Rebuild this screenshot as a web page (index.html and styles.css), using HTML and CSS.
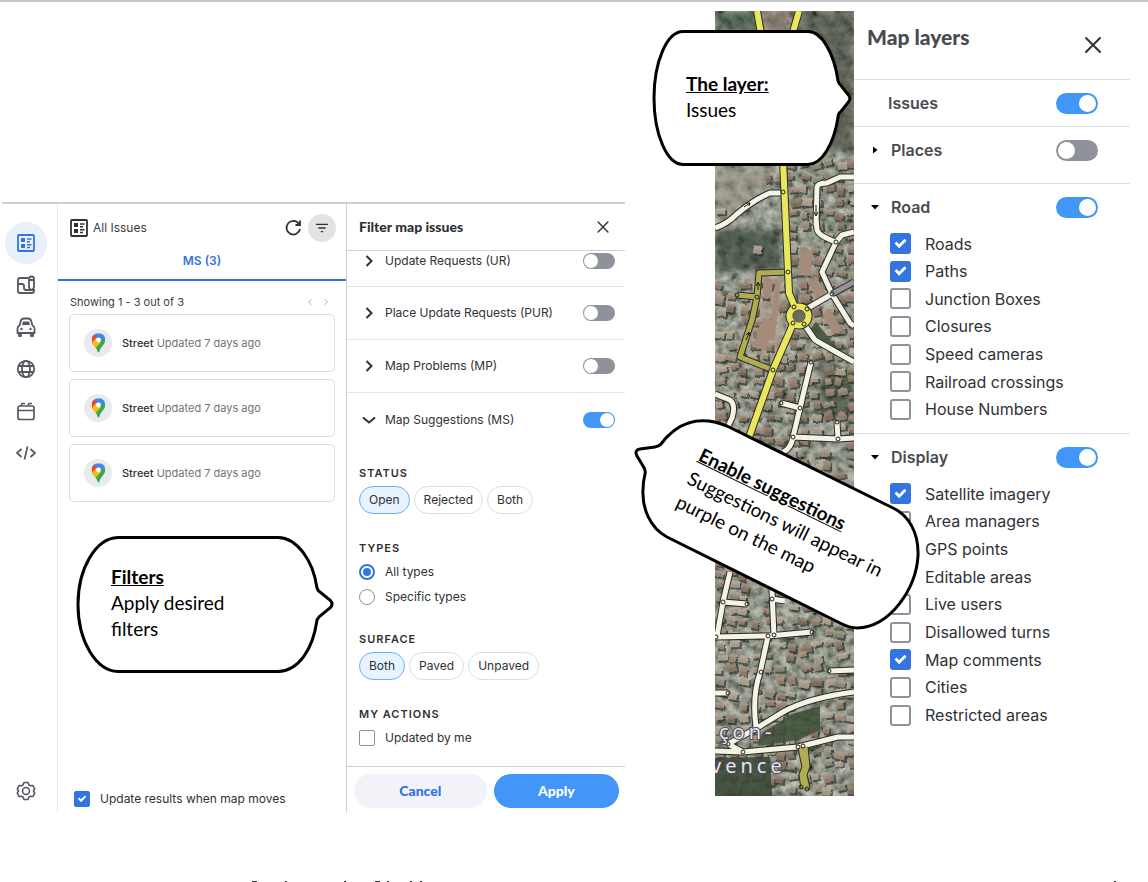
FILE: index.html
```html
<!DOCTYPE html>
<html lang="en">
<head>
<meta charset="utf-8">
<meta name="viewport" content="width=device-width, initial-scale=1">
<title>Map suggestions</title>
<link rel="stylesheet" href="styles.css">
</head>
<body>
<svg class="sprite" aria-hidden="true">
  <symbol id="i-list" viewBox="0 0 20 20"><g fill="none" stroke="currentColor" stroke-width="1.8"><rect x="2" y="2" width="16" height="16" rx="1"/><path d="M11 6h4.500M11 8.700h3M11 11.800h4.500M11 14.500h3" stroke-width="1.400"/></g><path d="M5 5h4v4H5zM5 11h4v4H5z" fill="currentColor"/></symbol>
  <symbol id="i-close" viewBox="0 0 20 20"><path d="M3 3l14 14M17 3L3 17" fill="none" stroke="currentColor" stroke-width="2" stroke-linecap="round"/></symbol>
  <symbol id="i-pin" viewBox="0 0 20 26">
    <clipPath id="pin-shape"><path d="M10 0C4.500 0 1 4 1 9c0 6 6 8 8 16q1 2 2 0c2-8 8-10 8-16 0-5-3.500-9-9-9z"/></clipPath>
    <g clip-path="url(#pin-shape)"><path d="M0 0h20v26H0z" fill="#34a853"/><path d="M2 0h16l1.500 4L10 12 2 4z" fill="#4285f4"/><path d="M0 2l3-.5L9 7 2 15H0z" fill="#ea4335"/><path d="M0 14L7 6l6 6-8 9z" fill="#fbbc04"/></g>
    <circle cx="10" cy="9" r="3.300" fill="#fff"/>
  </symbol>
</svg>
<main class="board">
  <section class="issues-app">
    <nav class="rail" aria-label="Sections">
      <button class="rail-item active" aria-label="Issues"><svg><use href="#i-list"/></svg></button>
      <button class="rail-item" aria-label="Map edits"><svg viewBox="0 0 20 20"><g fill="none" stroke="currentColor" stroke-width="1.800" stroke-linejoin="round"><path d="M12 3H4Q2 3 2 5v11q0 2 2 2h12q2 0 2-2v-2M2 9h4q2 0 2 2v2q0 2 2 2h8M13 3.500q0-2 2.500-2t2.500 2v9l-2 2.500h-1l-2-2.500zM13 5h5"/></g></svg></button>
      <button class="rail-item" aria-label="Drives"><svg viewBox="0 0 20 20"><g fill="none" stroke="currentColor" stroke-width="1.800" stroke-linejoin="round"><path d="M3.500 8.500l1.300-4.500Q5.500 1.500 8 1.500h4q2.500 0 3.200 2.500l1.300 4.500q2 1 2 3V16h-17v-4.500q0-2 2-3zM3 16v3h2v-3M15 16v3h2v-3"/></g><path d="M6 8l1-3.500h6L14 8z" fill="currentColor"/><circle cx="5.500" cy="12" r="1.200" fill="currentColor"/><circle cx="14.500" cy="12" r="1.200" fill="currentColor"/></svg></button>
      <button class="rail-item" aria-label="Areas"><svg viewBox="0 0 20 20"><g fill="none" stroke="currentColor" stroke-width="1.800"><circle cx="10" cy="10" r="8.200"/><ellipse cx="10" cy="10" rx="4" ry="8.200"/><path d="M2.500 7h15M2.500 13h15"/></g></svg></button>
      <button class="rail-item" aria-label="Events"><svg viewBox="0 0 20 20"><g fill="none" stroke="currentColor" stroke-width="1.700" stroke-linejoin="round"><rect x="2" y="5" width="16" height="13.500" rx="2"/><path d="M2 9.500h16M5 5l1-2.500h3M12 4.500l1-2h3"/></g></svg></button>
      <button class="rail-item" aria-label="Scripts"><svg viewBox="0 0 20 20"><path d="M5.500 6L1 10l4.500 4M14.500 6l4.500 4-4.500 4M11.500 3.500l-3 13" fill="none" stroke="currentColor" stroke-width="1.700"/></svg></button>
      <button class="rail-item settings" aria-label="Settings"><svg viewBox="0 0 20 20"><g fill="none" stroke="currentColor" stroke-width="1.600" stroke-linejoin="round"><path d="M8 1.500h4l1 2.500 1.500.8 2.500-.3 1.700 3.300L17.500 10l1.200 2.200-1.700 3.300-2.500-.3L13 16l-1 2.500H8L7 16l-1.500-.8-2.500.3-1.700-3.300L2.500 10 1.300 7.800 3 4.500l2.500.3L7 4z"/><circle cx="10" cy="10" r="3.500"/></g></svg></button>
    </nav>

    <section class="issue-list">
      <header class="list-head">
        <svg class="icon"><use href="#i-list"/></svg><h2>All Issues</h2>
        <button class="plain" aria-label="Refresh"><svg class="icon" viewBox="0 0 20 20"><path d="M16 6A6.800 6.800 0 1 0 17 11M17 2.500V7h-4.500" fill="none" stroke="currentColor" stroke-width="1.800"/></svg></button>
        <button class="plain round" aria-label="Filter"><svg class="icon" viewBox="0 0 20 20"><path d="M2.500 5.500h15M5.500 10h9M8.500 14.500h3" fill="none" stroke="currentColor" stroke-width="1.800"/></svg></button>
      </header>
      <button class="tab">MS (3)</button>
      <div class="pager"><span>Showing 1 - 3 out of 3</span>
        <button class="plain" aria-label="Previous"><svg viewBox="0 0 8 8"><path d="M5.500 1l-3 3 3 3"/></svg></button>
        <button class="plain" aria-label="Next"><svg viewBox="0 0 8 8"><path d="M2.500 1l3 3-3 3"/></svg></button>
      </div>
      <ul class="cards">
        <li><span class="pin"><svg><use href="#i-pin"/></svg></span><p><b>Street</b> Updated 7 days ago</p></li>
        <li><span class="pin"><svg><use href="#i-pin"/></svg></span><p><b>Street</b> Updated 7 days ago</p></li>
        <li><span class="pin"><svg><use href="#i-pin"/></svg></span><p><b>Street</b> Updated 7 days ago</p></li>
      </ul>
      <label class="auto-update"><input class="check" type="checkbox" checked>Update results when map moves</label>
      <aside class="callout callout-filters">
        <svg viewBox="75 535 260 140"><path d="M118 537.500H278C297 538 313 560 317 588q1 3 3 4l10 8q4 4 0 8l-10 8q-2 2-3 4C313 650 298 671 278 671.500H118C96 671 78 641 78 604.500 78 568 96 538 118 537.500z"/></svg>
        <p><strong>Filters</strong><br>Apply desired<br>filters</p>
      </aside>
    </section>

    <section class="filters">
      <header class="filters-head"><h2>Filter map issues</h2><button class="plain" aria-label="Close"><svg><use href="#i-close"/></svg></button></header>
      <div class="filters-body">
        <div class="type-row first"><button class="plain"><svg viewBox="0 0 14 14"><path d="M4.500 2l5 5-5 5"/></svg><span>Update Requests (UR)</span></button><input class="switch" type="checkbox" role="switch" aria-label="Update Requests"></div>
        <div class="type-row"><button class="plain"><svg viewBox="0 0 14 14"><path d="M4.500 2l5 5-5 5"/></svg><span>Place Update Requests (PUR)</span></button><input class="switch" type="checkbox" role="switch" aria-label="Place Update Requests"></div>
        <div class="type-row"><button class="plain"><svg viewBox="0 0 14 14"><path d="M4.500 2l5 5-5 5"/></svg><span>Map Problems (MP)</span></button><input class="switch" type="checkbox" role="switch" aria-label="Map Problems"></div>
        <div class="type-row open"><button class="plain"><svg viewBox="0 0 14 14"><path d="M1 4.500l6 5 6-5"/></svg><span>Map Suggestions (MS)</span></button><input class="switch" type="checkbox" role="switch" aria-label="Map Suggestions" checked></div>
        <section class="group"><h3>STATUS</h3><div class="chips"><button class="chip on">Open</button><button class="chip">Rejected</button><button class="chip">Both</button></div></section>
        <section class="group"><h3>TYPES</h3><div class="options"><label><input class="radio" type="radio" name="types" checked>All types</label><label><input class="radio" type="radio" name="types">Specific types</label></div></section>
        <section class="group"><h3>SURFACE</h3><div class="chips"><button class="chip on">Both</button><button class="chip">Paved</button><button class="chip">Unpaved</button></div></section>
        <section class="group"><h3>MY ACTIONS</h3><div class="options"><label><input class="check" type="checkbox">Updated by me</label></div></section>
      </div>
      <footer class="filters-foot"><button class="cancel">Cancel</button><button class="apply">Apply</button></footer>
    </section>
  </section>

  <section class="map-view">
    <svg class="map" viewBox="715 11 139 785" role="img" aria-label="Satellite map with roads">
      <defs>
        <filter id="ground" x="0" y="0" width="100%" height="100%"><feTurbulence type="fractalNoise" baseFrequency=".11" numOctaves="4" seed="7"/><feColorMatrix values=".75 0 0 0 -.09 .72 .03 0 0 -.07 .68 0 .03 0 -.1 0 0 0 0 1"/></filter>
        <filter id="soft"><feGaussianBlur stdDeviation="3"/></filter>
        <filter id="rough" x="0" y="0" width="100%" height="100%"><feTurbulence type="fractalNoise" baseFrequency=".25" numOctaves="2" seed="3" result="n"/><feDisplacementMap in="SourceGraphic" in2="n" scale="3" xChannelSelector="R" yChannelSelector="G"/><feGaussianBlur stdDeviation=".7"/></filter>
        <path id="white-roads" d="M715 228q12-4 22-14 18-15 33-21h13M816 225l1-38q1-4 10-4l13-6h14M816 218l1 12q2 6 19 12l6-7 12-3M836 242l-14 30 10 22 18 29 4 3M832 294l-24 14M806 327l9 13 39 22M811 362l-14 58M802 400l-9 37q-2 12-10 15M781 403l19 5M715 394l15 6q6 5 2 18l-5 10M793 437l45 2 16-1M837 422l1 17M730 572l-7 30-6 34M723 602l24 2M772 590l2 46M772 599l13 2M715 637l53-1 44-4M768 636l-8 37q-8 22-4 54M829 671l25-1M715 693h13M728 744l29-16 26-16q25-14 71-20M715 751l28 1 55-5 40-10h16M728 744l15 8"/>
        <path id="olive-roads" d="M788 272l-29 1-2 24-5 23-12 37 33 13M737 295l20 2M801 748l4 19-3 8 2 13M805 747l2 19-3 9 3 13"/>
        <path id="main-roads" d="M757 11l5 28M799 11l-8 28M783 160l5 112 1 21 5 12M793 324l-20 46-25 70"/>
      </defs>
      <path d="M715 11h139v785H715z" fill="#4b4f42"/>
      <path d="M715 11h139v785H715z" filter="url(#ground)"/>
      <g filter="url(#soft)" opacity=".6">
        <path d="M715 11h38l8 20h-46z" fill="#2e4631"/><path d="M761 11h34l-8 22h-22z" fill="#7d6b60"/><path d="M800 11h54v140h-54z" fill="#3c4236"/>
        <path d="M715 166h60l-15 25-45 34z" fill="#9a9484"/><path d="M715 230h65v40h-65z" fill="#26362b"/>
        <path d="M750 275l35 4v80l-45-5z" fill="#b3a493"/><path d="M822 362l32 10v45l-35 0z" fill="#2e3b2b"/>
      </g>
      <g id="houses" filter="url(#rough)"></g>
      <g opacity=".85"><path d="M808 332l8-10 22 27-22-8z" fill="#3c5236"/>
      <path d="M762 733l30-19 28-8v24l-22 10-40 6z" fill="#3d4e37"/><path d="M715 758l55-1 2 39h-57z" fill="#374532"/></g>
      <use href="#white-roads" class="casing"/><use href="#white-roads" class="white-road"/>
      <path class="casing" d="M832 294l22-12"/><path class="gray-road" d="M832 294l22-12"/>
      <use href="#olive-roads" class="casing"/><use href="#olive-roads" class="olive-road"/>
      <use href="#main-roads" class="casing wide"/>
      <circle class="casing wide" cx="799" cy="316" r="9.500"/>
      <use href="#main-roads" class="main-road"/>
      <circle class="main-road" cx="799" cy="316" r="9.500"/><circle cx="799" cy="316" r="6" fill="#6b6c60"/>
      <g id="nodes"></g>
      <path class="arrows" d="M816 205v10m-2-3l2 4 2-4M744 207l6-4m-4 0l4 0-1 3M758 290v-7m-2 3l2-4 2 4M746 340l3-7m-3 2l3-3 1 4"/>
      <text x="719" y="739" class="place">çon-</text><text x="711" y="773" class="place">vence</text>
    </svg>
    <aside class="callout callout-layer">
      <svg viewBox="650 28 203 140"><path d="M683 31.500H808c14 0 26 22 30 49q1 4 3 5l7 9q4 4 0 8l-7 9q-3 2-3 6c-4 26-16 47-30 47H683c-16 0-29-30-29-66.500s13-66.500 29-66.500z"/></svg>
      <p><strong>The layer:</strong><br>Issues</p>
    </aside>
    <aside class="callout callout-enable">
      <svg viewBox="632 416 290 216"><path d="M640 449l15-2q4-.5 6-3C676 424 698 414 727 426L893 508c15 7 26 24 25 48-2 32-27 71-61 72q-7 0-17-5L667 537c-17-9-25-29-24-47q0-8 2-16 1-4-2-8l-6-10q-3-6 3-7z"/></svg>
      <p><strong>Enable suggestions</strong><br>Suggestions will appear in<br>purple on the map</p>
    </aside>
  </section>

  <section class="layers">
    <header class="layers-head"><h2>Map layers</h2><button class="plain" aria-label="Close"><svg><use href="#i-close"/></svg></button></header>
    <section class="layer only"><div class="layer-row"><h3>Issues</h3><input class="switch big" type="checkbox" role="switch" aria-label="Issues" checked></div></section>
    <section class="layer places"><div class="layer-row"><svg viewBox="0 0 8 8"><path d="M2 .5L6.500 4 2 7.500z"/></svg><h3>Places</h3><input class="switch big" type="checkbox" role="switch" aria-label="Places"></div></section>
    <section class="layer"><div class="layer-row"><svg viewBox="0 0 8 8"><path d="M0 2h8L4 6.500z"/></svg><h3>Road</h3><input class="switch big" type="checkbox" role="switch" aria-label="Road" checked></div>
      <div class="layer-options road">
        <label><input class="check big" type="checkbox" checked>Roads</label>
        <label><input class="check big" type="checkbox" checked>Paths</label>
        <label><input class="check big" type="checkbox">Junction Boxes</label>
        <label><input class="check big" type="checkbox">Closures</label>
        <label><input class="check big" type="checkbox">Speed cameras</label>
        <label><input class="check big" type="checkbox">Railroad crossings</label>
        <label><input class="check big" type="checkbox">House Numbers</label>
      </div>
    </section>
    <section class="layer"><div class="layer-row"><svg viewBox="0 0 8 8"><path d="M0 2h8L4 6.500z"/></svg><h3>Display</h3><input class="switch big" type="checkbox" role="switch" aria-label="Display" checked></div>
      <div class="layer-options display">
        <label><input class="check big" type="checkbox" checked>Satellite imagery</label>
        <label><input class="check big" type="checkbox">Area managers</label>
        <label><input class="check big" type="checkbox">GPS points</label>
        <label><input class="check big" type="checkbox">Editable areas</label>
        <label><input class="check big" type="checkbox">Live users</label>
        <label><input class="check big" type="checkbox">Disallowed turns</label>
        <label><input class="check big" type="checkbox" checked>Map comments</label>
        <label><input class="check big" type="checkbox">Cities</label>
        <label><input class="check big" type="checkbox">Restricted areas</label>
      </div>
    </section>
  </section>
</main>
<svg class="page-edge" viewBox="0 0 1148 1" preserveAspectRatio="none" aria-hidden="true"><path d="M252 .5h5M285 .5h2M344 .5h2M375 .5h5M387 .5h2M410 .5h2M420 .5h2M1114 .5h2" stroke="#333"/></svg>
<script src="map.js"></script>
</body>
</html>
```
FILE: styles.css
```css
* { box-sizing: border-box; }
body {
  margin: 0;
  min-height: 100vh;
  display: flex;
  flex-direction: column;
  justify-content: space-between;
  overflow-x: hidden;
  border-top: 2px solid #c6c6c6;
  background: #fff;
  color: #3c3d40;
  font-family: Inter, Roboto, sans-serif;
  font-size: 12px;
  line-height: 16px;
}
h2, h3, p, ul { margin: 0; padding: 0; }
button { font: inherit; color: inherit; cursor: pointer; }
.sprite { position: absolute; width: 0; height: 0; }
.plain { display: flex; align-items: center; padding: 0; border: 0; background: none; }
.board {
  display: grid;
  grid-template-columns: 623fr 90fr 139fr 276fr 18fr;
  align-items: start;
  padding-left: 2px;
}
.map-view { grid-column: 3; }
.layers { grid-column: 4; }

.switch {
  flex: none;
  appearance: none;
  width: 32px;
  height: 16px;
  margin: 0;
  padding: 1px;
  border-radius: 16px;
  background: #8f929b;
}
.switch::before { content: ""; display: block; width: 14px; height: 14px; border-radius: 50%; background: #fff; }
.switch:checked { background: #4196f8; }
.switch:checked::before { margin-left: auto; }
.switch.big { width: 42px; height: 21px; padding: 2px; }
.switch.big::before { width: 17px; height: 17px; }

.check, .radio {
  flex: none;
  display: grid;
  place-content: center;
  appearance: none;
  width: 16px;
  height: 16px;
  margin: 0;
  border: 1px solid #8f929b;
  border-radius: 2px;
  background: #fff;
}
.check:checked { border-color: #3374e0; background: #3374e0; }
.check:checked::before {
  content: "";
  width: 10px;
  height: 10px;
  background: #fff;
  clip-path: polygon(8% 48%, 22% 34%, 40% 53%, 79% 14%, 93% 28%, 40% 82%);
}
.check.big { width: 21px; height: 21px; border-width: 2px; border-radius: 3px; }
.check.big:checked::before { width: 14px; height: 14px; }
.radio { border-radius: 50%; }
.radio:checked { border: 2px solid #3374e0; }
.radio:checked::before { content: ""; width: 8px; height: 8px; border-radius: 50%; background: #3374e0; }

.issues-app {
  display: grid;
  grid-template-columns: 55fr 289fr 279fr;
  min-height: 610px;
  margin-top: 200px;
  border-top: 2px solid #d0d1d3;
}
.rail { display: flex; flex-direction: column; align-items: center; padding: 18px 7px 0 0; }
.rail-item { flex: none; display: grid; place-items: center; width: 42px; height: 42px; padding: 0; border: 0; border-radius: 50%; background: none; color: #55585f; }
.rail-item svg { width: 20px; height: 20px; }
.rail-item.active { background: #e8f0fc; color: #3374e0; }
.rail-item.settings { margin-top: auto; }

.issue-list { position: relative; display: flex; flex-direction: column; border-left: 1px solid #e8eaed; }
.list-head { display: flex; align-items: center; height: 48px; padding: 0 10px 0 11px; }
.icon { width: 20px; height: 20px; color: #303135; }
.list-head h2 { flex: 1; margin-left: 4px; font-size: 12px; font-weight: 400; }
.round { justify-content: center; width: 28px; height: 28px; margin-left: 5px; border-radius: 50%; background: #e3e3e3; }
.round .icon { width: 16px; height: 16px; }
.tab { height: 29px; padding: 0 0 10px; border: 0; border-bottom: 2px solid #3374e0; background: none; color: #3374e0; font-weight: 600; }
.pager { display: flex; align-items: center; gap: 8px; margin: 13px 16px 4px 12px; font-size: 11px; }
.pager span { flex: 1; }
.pager svg { width: 8px; height: 8px; fill: none; stroke: #b9bbc0; }
.cards { display: grid; gap: 7px; padding: 0 11px; list-style: none; }
.cards li { display: flex; align-items: center; gap: 10px; height: 58px; padding-left: 14px; border: 1px solid #dcdde0; border-radius: 5px; color: #70747b; font-size: 11px; }
.cards b { color: #303135; font-weight: 500; }
.pin { display: grid; place-items: center; width: 28px; height: 28px; border-radius: 50%; background: #e8eaed; }
.pin svg { width: 15px; height: 20px; }
.auto-update { display: flex; align-items: center; gap: 10px; margin: auto 0 5px 16px; color: #303135; }

.filters { display: flex; flex-direction: column; border-left: 1px solid #cfd1d4; }
.filters-head { flex: none; display: flex; align-items: center; justify-content: space-between; height: 47px; padding: 0 15px 0 12px; border-bottom: 1px solid #cfd1d4; color: #303135; }
.filters-head h2 { font: 900 14px/20px Lato, sans-serif; }
.filters-head svg { width: 14px; height: 14px; }
.filters-body { flex: 1; color: #303135; }
.type-row { display: flex; align-items: center; justify-content: space-between; height: 53px; padding: 0 10px 0 15px; border-bottom: 1px solid #e3e4e6; }
.type-row.first { height: 36px; padding-bottom: 16px; }
.type-row.open { border: 0; }
.type-row button { gap: 9px; }
.type-row svg { width: 14px; height: 14px; fill: none; stroke: #303135; stroke-width: 2; }
.group { padding: 0 12px; margin-bottom: 26px; }
.group:last-child { margin-bottom: 0; }
.type-row.open + .group { margin-top: 19px; }
.group h3 { margin-bottom: 5px; font-size: 11px; font-weight: 600; letter-spacing: 1px; }
.chips { display: flex; gap: 4px; }
.chip { height: 28px; padding: 0 9px; border: 1px solid #dcdde0; border-radius: 14px; background: #fff; }
.chip.on { border-color: #6aaeff; background: #e7f3ff; }
.options { display: grid; gap: 9px; padding-top: 3px; }
.options label { display: flex; align-items: center; gap: 10px; }
.filters-foot { flex: none; display: flex; gap: 7px; height: 46px; padding: 7px 6px 4px 7px; border-top: 1px solid #cfd1d4; font: 900 14px/20px Lato, sans-serif; }
.filters-foot button { flex: 133; border: 0; border-radius: 18px; background: #f2f3f8; color: #3374e0; }
.filters-foot .apply { flex: 125; background: #4196f8; color: #fff; }

.map-view { position: relative; padding-top: 9px; }
.map { display: block; width: 100%; height: auto; stroke-linejoin: round; }
.casing { fill: none; stroke: #292c27; stroke-width: 7px; }
.casing.wide { stroke-width: 8px; }
.white-road { fill: none; stroke: #f4f3e6; stroke-width: 5px; }
.gray-road { fill: none; stroke: #96969a; stroke-width: 5px; }
.olive-road { fill: none; stroke: #b2ac50; stroke-width: 5px; }
.main-road { fill: none; stroke: #eae75f; stroke-width: 6px; }
#nodes circle { fill: none; stroke: #22231b; stroke-width: 1px; }
.arrows { fill: none; stroke: #191a17; stroke-width: 1px; }
.place { fill: #e4e2ee; stroke: #4d4b57; stroke-width: 2px; paint-order: stroke; font: 20px "Noto Sans", sans-serif; letter-spacing: 4px; }

.callout { position: absolute; z-index: 2; color: #000; font: 19px/26px Lato, sans-serif; }
.callout svg { display: block; width: 100%; fill: #fff; stroke: #000; stroke-width: 3px; }
.callout p { position: absolute; white-space: nowrap; }
.callout strong { text-decoration: underline; }
.callout-filters { top: 331px; left: 17px; width: 260px; }
.callout-filters p { top: 29px; left: 36px; }
.callout-layer { top: 26px; left: -65px; width: 203px; }
.callout-layer p { top: 43px; left: 36px; }
.callout-enable { top: 414px; left: -83px; width: 290px; }
.callout-enable p { top: 69px; left: 46px; transform: rotate(26deg); }

.layers { color: #303135; font-size: 16px; line-height: 20px; }
.layers-head { display: flex; align-items: center; justify-content: space-between; height: 78px; padding: 8px 27px 0 13px; border-bottom: 1px solid #dadfe2; }
.layers-head h2 { padding-bottom: 16px; color: #4a4b4e; font: 900 21px/24px Lato, sans-serif; }
.layers-head svg { width: 20px; height: 20px; }
.layer { border-bottom: 1px solid #dadfe2; }
.layer:last-child { border: 0; }
.layer-row { display: grid; grid-template-columns: 8px 1fr auto; gap: 12px; align-items: center; height: 46px; padding: 0 32px 0 17px; }
.layer-row svg { width: 8px; height: 8px; }
.layer-row h3 { color: #4a4b4e; font-size: 16px; font-weight: 600; }
.only .layer-row { grid-template-columns: 1fr auto; padding-left: 34px; }
.places { padding-bottom: 10px; }
.layer-options { display: grid; padding: 0 0 0 36px; }
.layer-options label { display: flex; align-items: center; gap: 14px; }
.road { min-height: 203px; padding-bottom: 10px; }
.display { min-height: 249px; }
.page-edge { flex: none; display: block; width: 100%; height: 1px; }
```
FILE: map.js
```js
// Rooftops are scattered with a seeded generator so that the map looks the same on each load.
const NS = "http://www.w3.org/2000/svg";
let seed = 42;
const rnd = () => (seed = (seed * 16807) % 2147483647) / 2147483647;
const add = (parent, name, attrs) => {
  const el = document.createElementNS(NS, name);
  for (const key in attrs) el.setAttribute(key, attrs[key]);
  parent.append(el);
};
const houses = document.getElementById("houses");
const roofs = ["#a6917e", "#907b69", "#b3a496", "#857363", "#b8aa96", "#9c8272", "#969080"];
for (let y = 160; y < 792; y += 12) {
  for (let x = 714; x < 854; x += 12) {
    if (y < 275 && x < 785 && rnd() < 0.85) continue;
    if (rnd() < 0.15) continue;
    const w = 6 + rnd() * 5, h = 5 + rnd() * 4, px = x + rnd() * 4, py = y + rnd() * 4;
    const turn = `rotate(${rnd() * 30 - 15} ${px} ${py})`;
    add(houses, "rect", { x: px + 1, y: py + 2, width: w + 1, height: h, fill: "#2a2e27", opacity: 0.7, transform: turn });
    add(houses, "rect", { x: px, y: py, width: w, height: h, fill: roofs[Math.floor(rnd() * roofs.length)], opacity: 0.85, transform: turn });
    add(houses, "rect", { x: px, y: py, width: w, height: h / 2, fill: "#d0bda8", opacity: 0.2, transform: turn });
  }
}
for (const [x, y, w, h, a] of [[800, 250, 13, 25, 5], [807, 282, 11, 22, -28], [822, 314, 10, 24, -28], [764, 278, 9, 20, 4], [762, 318, 13, 30, 18], [775, 280, 6, 60, 6]])
  add(houses, "rect", { x, y, width: w, height: h, fill: "#a58b79", transform: `rotate(${a} ${x} ${y})` });

const nodes = document.getElementById("nodes");
for (const [cx, cy] of [[783, 192], [788, 272], [773, 370], [737, 295], [757, 297], [836, 242], [832, 294], [794, 307], [807, 309], [793, 323], [804, 324], [811, 362], [781, 403], [800, 408], [793, 437], [837, 422], [838, 439], [723, 602], [747, 604], [772, 599], [716, 637], [768, 636], [774, 635], [812, 632], [829, 671], [761, 672], [728, 693], [728, 744], [743, 752], [798, 747], [803, 746], [801, 787], [807, 789]])
  add(nodes, "circle", { cx, cy, r: 2 });
```
